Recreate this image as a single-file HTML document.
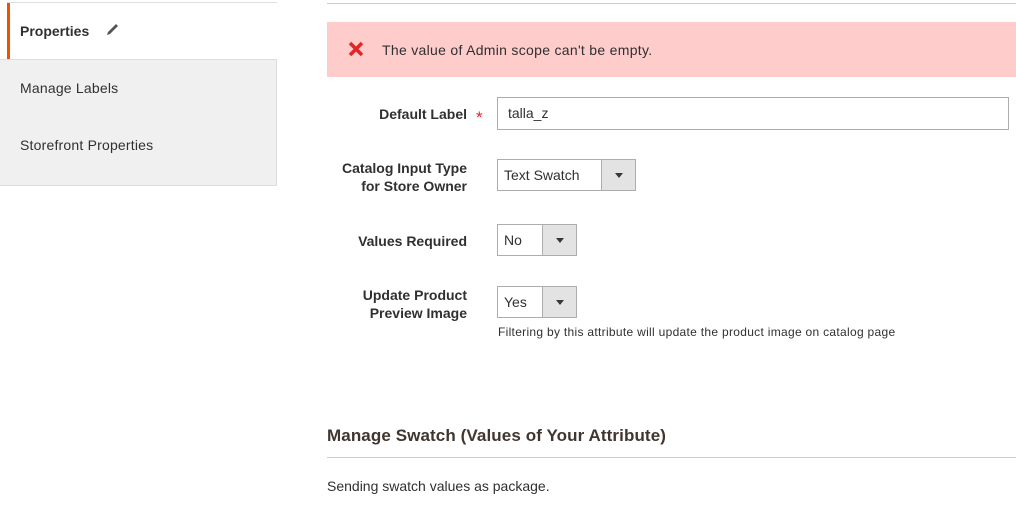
<!DOCTYPE html>
<html><head><style>
*{box-sizing:border-box;margin:0;padding:0}
body{width:1016px;height:523px;background:#fff;font-family:"Liberation Sans",sans-serif;color:#303030;position:relative;overflow:hidden;font-size:14px}
.a{position:absolute}
.lbl{position:absolute;text-align:right;right:549px;font-weight:bold;font-size:14px;color:#303030;line-height:18px}
.sel{position:absolute;border:1px solid #adadad;background:#fff;height:32px}
.sel span{position:absolute;left:6px;top:7px;font-size:14px}
.sel i{position:absolute;top:0;right:0;bottom:0;width:34px;background:#e3e3e3;border-left:1px solid #adadad}
.sel i:after{content:"";position:absolute;left:13px;top:13px;border-left:4px solid transparent;border-right:4px solid transparent;border-top:5px solid #41362f}
</style></head><body>
<div class="a" style="left:7px;top:2px;width:270px;height:1px;background:#ddd"></div>
<div class="a" style="left:7px;top:3px;width:270px;height:57px;background:#fff;border-left:3px solid #eb5202"></div>
<div class="a" style="left:20px;top:23px;font-size:14px;font-weight:bold;color:#303030">Properties</div>
<svg class="a" style="left:105px;top:23px" width="15" height="14" viewBox="0 0 15 14"><path d="M2 12 L3 9 L11 1 L13 3 L5 11 Z" fill="#555"/></svg>
<div class="a" style="left:0;top:59px;width:277px;height:127px;background:#f0f0f0;border-top:1px solid #ddd;border-right:1px solid #ddd;border-bottom:1px solid #ddd"></div>
<div class="a" style="left:20px;top:80px;color:#303030;letter-spacing:.2px">Manage Labels</div>
<div class="a" style="left:20px;top:137px;color:#303030;letter-spacing:.2px">Storefront Properties</div>

<div class="a" style="left:327px;top:3px;width:689px;height:1px;background:#ccc"></div>
<div class="a" style="left:327px;top:22px;width:689px;height:55px;background:#ffcccc"></div>
<svg class="a" style="left:348px;top:41px" width="16" height="16" viewBox="0 0 16 16"><path d="M2 2 L14 14 M14 2 L2 14" stroke="#e22626" stroke-width="3.5"/></svg>
<div class="a" style="left:382px;top:42px;color:#303030;letter-spacing:.3px">The value of Admin scope can't be empty.</div>

<div class="lbl" style="top:105px">Default Label</div>
<div class="a" style="left:476px;top:108px;color:#e22626;font-size:17px">*</div>
<div class="a" style="left:497px;top:97px;width:512px;height:33px;border:1px solid #adadad"></div>
<div class="a" style="left:508px;top:105px">talla_z</div>

<div class="lbl" style="top:159px">Catalog Input Type<br>for Store Owner</div>
<div class="sel" style="left:497px;top:159px;width:139px"><span>Text Swatch</span><i></i></div>

<div class="lbl" style="top:232px">Values Required</div>
<div class="sel" style="left:497px;top:224px;width:80px"><span>No</span><i></i></div>

<div class="lbl" style="top:286px">Update Product<br>Preview Image</div>
<div class="sel" style="left:497px;top:286px;width:80px"><span>Yes</span><i></i></div>
<div class="a" style="left:498px;top:325px;font-size:12px;color:#303030;letter-spacing:.3px">Filtering by this attribute will update the product image on catalog page</div>

<div class="a" style="left:327px;top:426px;font-size:17px;font-weight:bold;color:#41362f;letter-spacing:.1px">Manage Swatch (Values of Your Attribute)</div>
<div class="a" style="left:327px;top:457px;width:689px;height:1px;background:#ccc"></div>
<div class="a" style="left:327px;top:478px;color:#303030">Sending swatch values as package.</div>
</body></html>
